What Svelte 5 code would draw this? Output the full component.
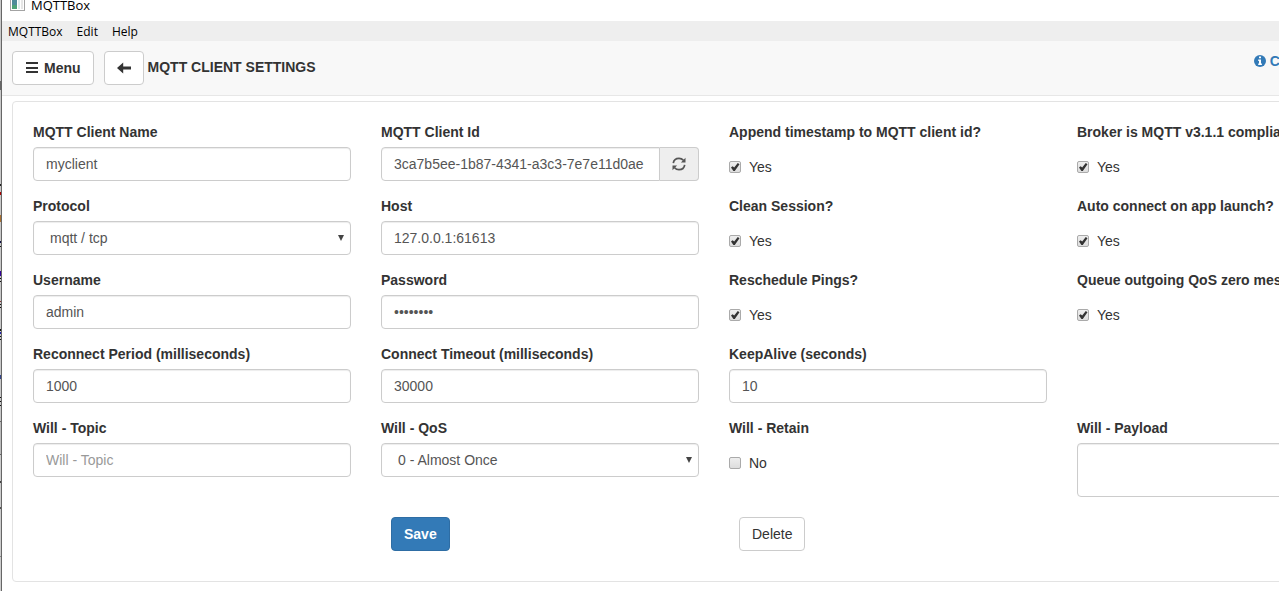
<script lang="ts">
	// Settings form for a single MQTT client, shown inside the desktop window frame

	type Field = {
		id: string;
		label: string;
		type: 'text' | 'password' | 'id' | 'select' | 'check' | 'textarea' | 'blank';
		value?: string;
		checked?: boolean;
		placeholder?: string;
	};

	const fields: Field[] = $state([
		{ id: 'clientName', label: 'MQTT Client Name', type: 'text', value: 'myclient' },
		{ id: 'clientId', label: 'MQTT Client Id', type: 'id', value: '3ca7b5ee-1b87-4341-a3c3-7e7e11d0ae' },
		{ id: 'timestamp', label: 'Append timestamp to MQTT client id?', type: 'check', checked: true },
		{ id: 'compliant', label: 'Broker is MQTT v3.1.1 compliant?', type: 'check', checked: true },
		{ id: 'protocol', label: 'Protocol', type: 'select', value: 'mqtt / tcp' },
		{ id: 'host', label: 'Host', type: 'text', value: '127.0.0.1:61613' },
		{ id: 'clean', label: 'Clean Session?', type: 'check', checked: true },
		{ id: 'autoConnect', label: 'Auto connect on app launch?', type: 'check', checked: true },
		{ id: 'username', label: 'Username', type: 'text', value: 'admin' },
		{ id: 'password', label: 'Password', type: 'password', value: 'password' },
		{ id: 'pings', label: 'Reschedule Pings?', type: 'check', checked: true },
		{ id: 'queueQos', label: 'Queue outgoing QoS zero messages?', type: 'check', checked: true },
		{ id: 'reconnect', label: 'Reconnect Period (milliseconds)', type: 'text', value: '1000' },
		{ id: 'timeout', label: 'Connect Timeout (milliseconds)', type: 'text', value: '30000' },
		{ id: 'keepAlive', label: 'KeepAlive (seconds)', type: 'text', value: '10' },
		{ id: 'spacer', label: '', type: 'blank' },
		{ id: 'willTopic', label: 'Will - Topic', type: 'text', value: '', placeholder: 'Will - Topic' },
		{ id: 'willQos', label: 'Will - QoS', type: 'select', value: '0 - Almost Once' },
		{ id: 'willRetain', label: 'Will - Retain', type: 'check', checked: false },
		{ id: 'willPayload', label: 'Will - Payload', type: 'textarea', value: '' }
	]);

	const options: Record<string, string[]> = {
		protocol: ['mqtt / tcp', 'mqtts / tls', 'ws', 'wss'],
		willQos: ['0 - Almost Once', '1 - Atleast Once', '2 - Exactly Once']
	};
</script>

<div class="desktop">
	<div class="window">
		<div class="title-bar">
			<svg class="app-icon" width="15" height="13" viewBox="0 0 15 13">
				<rect x="0.5" y="0.5" width="14" height="12" fill="#fff" stroke="#a3a3a3" />
				<rect x="2" y="2" width="5" height="9" fill="#4d8b99" />
				<rect x="2" y="7" width="5" height="4" fill="#4ca278" />
				<rect x="8" y="2" width="2" height="9" fill="#dcebeb" />
				<rect x="11" y="2" width="2" height="9" fill="#e6e6e6" />
			</svg>
			<span>MQTTBox</span>
		</div>
		<nav class="menu-bar">
			<button type="button">MQTTBox</button>
			<button type="button">Edit</button>
			<button type="button">Help</button>
		</nav>

		<header class="toolbar">
			<button type="button" class="btn strong">
				<svg width="14" height="12" viewBox="0 0 14 12" fill="currentColor">
					<path d="M1 0h12v2H1zM1 5h12v2H1zM1 9h12v2H1z" />
				</svg>
				Menu
			</button>
			<button type="button" class="btn back" aria-label="Back">
				<svg width="14" height="12" viewBox="0 0 14 12" fill="currentColor">
					<path d="M0 6 6.2 0.6V4.4H14V7.6H6.2V11.4Z" />
				</svg>
			</button>
			<h1>MQTT CLIENT SETTINGS</h1>
			<a class="help" href="#settings">
				<svg width="12" height="12" viewBox="0 0 12 12">
					<circle cx="6" cy="6" r="6" fill="currentColor" />
					<path d="M5 1.4h2v1.8H5zM4.2 4.4H7v4h.9V10H4.2V8.4H5V6h-.8z" fill="#fff" />
				</svg>
				Client Settings Help
			</a>
		</header>

		<form class="panel" id="settings" onsubmit={(e) => e.preventDefault()}>
			<div class="fields">
				{#each fields as field (field.id)}
					<div class="field">
						{#if field.type !== 'blank'}
							<label class="name" for={field.id}>{field.label}</label>
						{/if}
						{#if field.type === 'text'}
							<input class="control" id={field.id} type="text" placeholder={field.placeholder} bind:value={field.value} />
						{:else if field.type === 'password'}
							<input class="control" id={field.id} type="password" bind:value={field.value} />
						{:else if field.type === 'id'}
							<div class="group">
								<input class="control" id={field.id} type="text" bind:value={field.value} />
								<button type="button" class="addon" aria-label="Generate new client id">
									<svg width="14" height="14" viewBox="0 0 14 14">
										<path d="M1.3 6.1C1.7 3.3 4 1.3 7 1.3c1.8 0 3.3.7 4.4 2M12.7 7.9c-.4 2.8-2.7 4.8-5.7 4.8-1.8 0-3.3-.7-4.4-2" fill="none" stroke="currentColor" stroke-width="1.7" />
										<path d="M13.5.8v4.6H8.9zM.5 13.2V8.6h4.6z" fill="currentColor" />
									</svg>
								</button>
							</div>
						{:else if field.type === 'select'}
							<div class="select">
								<select class="control" id={field.id} bind:value={field.value}>
									{#each options[field.id] as option}
										<option>{option}</option>
									{/each}
								</select>
							</div>
						{:else if field.type === 'check'}
							<label class="check">
								<input id={field.id} type="checkbox" bind:checked={field.checked} />
								{field.checked ? 'Yes' : 'No'}
							</label>
						{:else if field.type === 'textarea'}
							<textarea class="control" id={field.id} bind:value={field.value}></textarea>
						{/if}
					</div>
				{/each}
			</div>
			<div class="actions">
				<button type="submit" class="btn primary">Save</button>
				<button type="button" class="btn">Delete</button>
			</div>
		</form>
	</div>
</div>

<style>
	:global(body) {
		overflow: hidden;
		background: #fff;
	}

	/* Sliver of the desktop that shows behind the window's left edge */
	.desktop {
		padding-left: 1px;
		background: linear-gradient(
			#c8c8c8 81px, #666 81px 90px, #c8c8c8 90px 184px,
			#222 184px 186px, #c8c8c8 186px 192px, #a00 192px 195px, #c8c8c8 195px 215px,
			#a87030 215px 222px, #c8c8c8 222px 241px, #114 241px 243px, #c8c8c8 243px 246px,
			#111 246px 247px, #c8c8c8 247px 271px, #309 271px 276px, #c8c8c8 276px 278px,
			#111 278px 279px, #c8c8c8 279px 281px, #111 281px 282px, #c8c8c8 282px 301px,
			#833 301px 302px, #c8c8c8 302px 304px, #111 304px 305px, #c8c8c8 305px 307px,
			#111 307px 308px, #c8c8c8 308px 329px, #111 329px 331px, #c8c8c8 331px 332px,
			#22a 332px 334px, #c8c8c8 334px 336px, #111 336px 337px, #c8c8c8 337px 339px,
			#111 339px 340px, #c8c8c8 340px 375px, #348 375px 379px, #c8c8c8 379px 397px,
			#111 397px 398px, #c8c8c8 398px 401px, #111 401px 402px, #c8c8c8 402px 405px,
			#111 405px 406px, #c8c8c8 406px 421px, #666 421px 422px, #bbb 422px 454px,
			#666 454px 455px, #ccc 455px 481px, #444 481px 483px, #ccc 483px 507px,
			#555 507px 509px, #ccc 509px 556px, #888 556px 557px, #ccc 557px
		);
	}

	.window {
		box-sizing: border-box;
		min-height: 100vh;
		border-left: 1px solid #666;
		background: #fff;
		overflow: hidden;
		color: #333;
		font: 14px/20px 'Liberation Sans', Arial, sans-serif;
	}

	button,
	input,
	select,
	textarea {
		font: inherit;
		color: inherit;
	}

	.title-bar {
		display: flex;
		align-items: flex-start;
		gap: 6px;
		height: 21px;
		padding-left: 8px;
		color: #000;
		font: 13px/16px 'Open Sans', sans-serif;
	}

	.title-bar span {
		margin-top: -3px;
	}

	.app-icon {
		margin-top: -2px;
	}

	.menu-bar {
		display: flex;
		gap: 14px;
		height: 20px;
		padding-left: 6px;
		background: #eee;
		color: #000;
		font: 12px/22px 'Open Sans', sans-serif;
	}

	.menu-bar button {
		padding: 0;
		border: 0;
		background: none;
	}

	.toolbar {
		display: flex;
		align-items: flex-start;
		min-width: 1390px;
		height: 54px;
		padding: 0 10px;
		border-bottom: 1px solid #e7e7e7;
		background: #f8f8f8;
	}

	.toolbar .btn {
		margin: 10px 10px 0 0;
	}

	.toolbar .back {
		margin-right: 4px;
	}

	h1 {
		margin: 16px 0 0;
		font-size: 14px;
		line-height: 20px;
	}

	.btn {
		display: inline-flex;
		align-items: center;
		gap: 5px;
		height: 34px;
		padding: 0 12px;
		border: 1px solid #ccc;
		border-radius: 4px;
		background: #fff;
	}

	.strong,
	.primary {
		font-weight: bold;
	}

	.primary {
		border-color: #2e6da4;
		background: #337ab7;
		color: #fff;
	}

	.help {
		display: flex;
		align-items: center;
		gap: 4px;
		margin: 10px 0 0 auto;
		color: #337ab7;
		font-weight: bold;
		text-decoration: none;
	}

	.panel {
		box-sizing: border-box;
		min-width: 1404px;
		margin: 5px 10px 0;
		padding: 20px 20px 30px;
		border: 1px solid #e3e3e3;
		border-radius: 4px;
	}

	.fields,
	.actions {
		display: grid;
		grid-template-columns: repeat(4, minmax(318px, 1fr));
		column-gap: 30px;
	}

	.field {
		min-height: 74px;
	}

	.name {
		display: block;
		margin-bottom: 5px;
		font-weight: bold;
		white-space: nowrap;
	}

	.control {
		display: block;
		box-sizing: border-box;
		width: 100%;
		height: 34px;
		padding: 6px 12px;
		border: 1px solid #ccc;
		border-radius: 4px;
		background: #fff;
		box-shadow: inset 0 1px 1px rgba(0, 0, 0, 0.075);
		color: #555;
	}

	.control::placeholder {
		color: #999;
	}

	textarea.control {
		height: 54px;
		resize: none;
	}

	.group {
		display: flex;
	}

	.group .control {
		flex: 1;
		min-width: 0;
		border-radius: 4px 0 0 4px;
	}

	.addon {
		display: grid;
		place-items: center;
		width: 39px;
		padding: 0;
		border: 1px solid #ccc;
		border-left: 0;
		border-radius: 0 4px 4px 0;
		background: #eee;
		color: #555;
	}

	.select {
		position: relative;
	}

	.select::after {
		content: '';
		position: absolute;
		top: 14px;
		right: 7px;
		border: solid transparent;
		border-width: 6px 3px 0;
		border-top-color: #444;
		pointer-events: none;
	}

	select.control {
		padding-left: 16px;
		appearance: none;
	}

	.check {
		display: flex;
		align-items: center;
		gap: 8px;
		padding-top: 10px;
	}

	.check input {
		box-sizing: border-box;
		width: 12px;
		height: 12px;
		margin: 0;
		border: 1px solid #aaa;
		border-radius: 2px;
		background: linear-gradient(#eee, #ddd);
		appearance: none;
	}

	/* Tick drawn over the box */
	.check input:checked::after {
		content: '';
		display: block;
		width: 10px;
		height: 10px;
		background: #333;
		clip-path: polygon(10% 55%, 26% 42%, 42% 56%, 78% 10%, 95% 22%, 48% 90%, 34% 90%);
	}

	.actions {
		margin-top: 20px;
		padding: 0 10px;
	}

	.actions .btn {
		justify-self: start;
	}

	.primary {
		grid-column: 2;
	}
</style>
